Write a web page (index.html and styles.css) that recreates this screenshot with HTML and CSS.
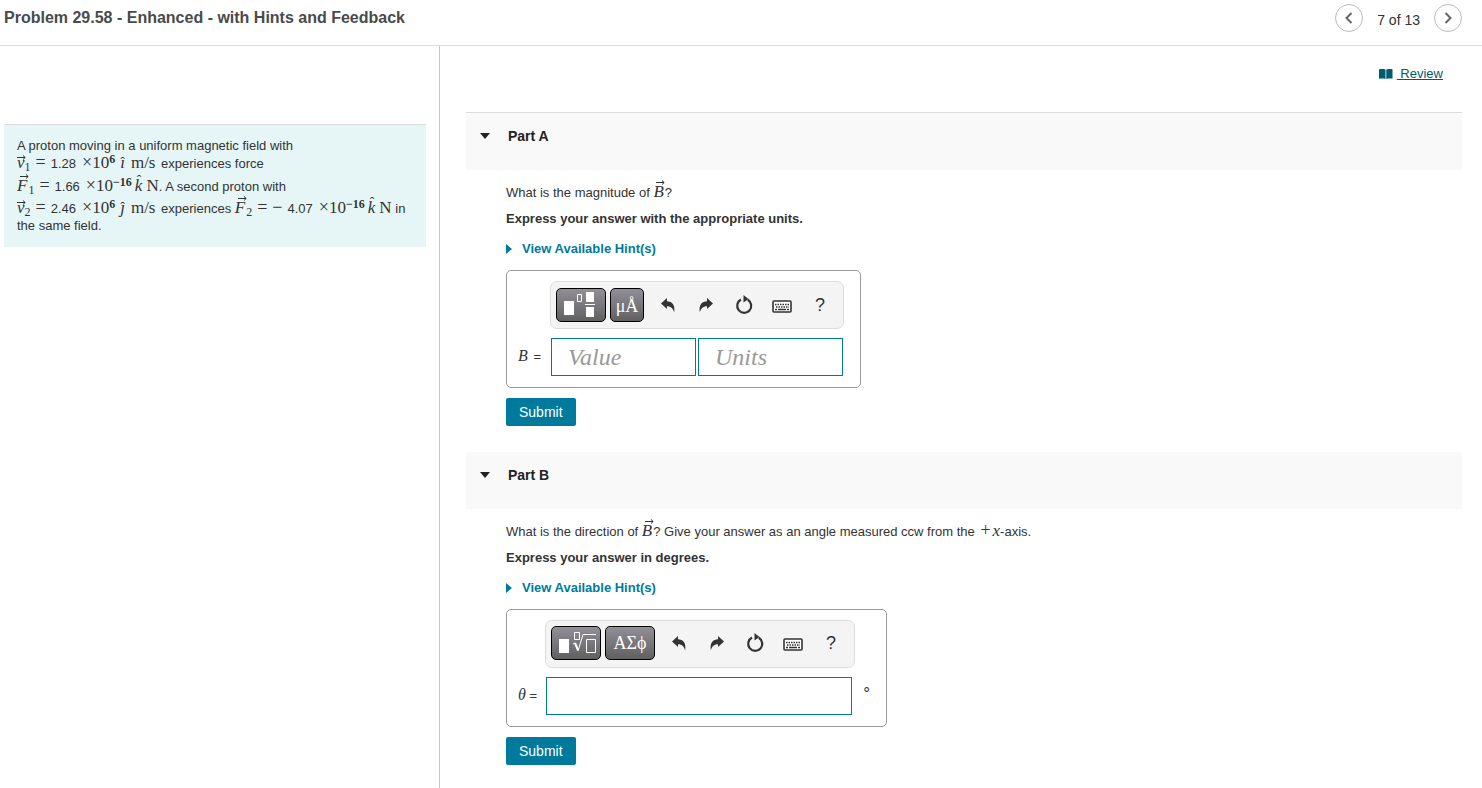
FILE: index.html
```html
<!DOCTYPE html>
<html lang="en">
<head>
<meta charset="utf-8">
<title>Problem 29.58</title>
<link rel="stylesheet" href="styles.css">
</head>
<body>
<svg class="defs" aria-hidden="true">
  <symbol id="undo" viewBox="0 0 16 16"><path d="M1 6.500 7 1v3.200c5 .2 8.300 3.300 7.200 11C13 11.500 11 9.200 7 9.200V12z"/></symbol>
  <symbol id="reset" viewBox="0 0 18 20"><path d="M12.800 4.800A7 7 0 1 1 6 4.600" fill="none" stroke="#333" stroke-width="2.200"/><path d="M8.500 0v7.500l5-3.500z"/></symbol>
  <symbol id="keyboard" viewBox="0 0 20 14"><rect x="1" y="1" width="18" height="11" rx="1" fill="#fff" stroke="#333" stroke-width="1.600"/><path d="M3 4.500h14M4 7h13" stroke="#333" stroke-width="1.500" stroke-dasharray="1.500 1"/><path d="M3 9.500h2M6 9.500h8M15 9.500h2" stroke="#333" stroke-width="1.500"/></symbol>
  <symbol id="arrow" viewBox="0 0 9 5"><path d="M0 2.500h8M6 .5l2.200 2L6 4.500" fill="none" stroke="#333"/></symbol>
</svg>
<header class="top">
  <h1>Problem 29.58 - Enhanced - with Hints and Feedback</h1>
  <nav class="pager">
    <button type="button" aria-label="Previous"><svg viewBox="0 0 10 14"><path d="M7.500 2 2.500 7l5 5"/></svg></button>
    <span>7 of 13</span>
    <button type="button" aria-label="Next"><svg viewBox="0 0 10 14"><path d="m2.500 2 5 5-5 5"/></svg></button>
  </nav>
</header>
<main class="page">
  <aside class="side">
    <div class="problem">
      <div>A proton moving in a uniform magnetic field with</div>
      <div class="mid"><i class="m vec">v<svg><use href="#arrow"/></svg></i><sub>1</sub><span class="op">=</span>1.28<span class="times">×</span><span class="m">10</span><sup>6</sup><i class="m hat">ı</i><span class="m unit">m/s</span> experiences force</div>
      <div class="tall"><i class="m vec cap">F<svg><use href="#arrow"/></svg></i><sub>1</sub><span class="op">=</span>1.66<span class="times">×</span><span class="m">10</span><sup>−16</sup><i class="m hat k">k</i><span class="m n">N</span>. A second proton with</div>
      <div><i class="m vec">v<svg><use href="#arrow"/></svg></i><sub>2</sub><span class="op">=</span>2.46<span class="times">×</span><span class="m">10</span><sup>6</sup><i class="m hat">ȷ</i><span class="m unit">m/s</span> experiences <i class="m vec cap">F<svg><use href="#arrow"/></svg></i><sub>2</sub><span class="op">=</span><span class="op neg">−</span>4.07<span class="times">×</span><span class="m">10</span><sup>−16</sup><i class="m hat k">k</i><span class="m n">N</span> in</div>
      <div>the same field.</div>
    </div>
  </aside>
  <div class="content">
    <div class="review"><a href="#"><svg viewBox="0 0 14 10"><path d="M0 .3C2.500 0 4.500 0 6.500.6V10C4.500 9.500 2.500 9.500 0 9.700zM7.300.6C9.500 0 11.500 0 13.500.3v9.400C11.500 9.500 9.500 9.500 7.300 10z"/></svg><span>&nbsp;Review</span></a></div>
    <section>
      <h2 class="part first"><button type="button"><svg viewBox="0 0 10 6"><path d="M0 0h10L5 6z"/></svg>Part A</button></h2>
      <div class="body">
        <p>What is the magnitude of <i class="m vec cap">B<svg><use href="#arrow"/></svg></i>?</p>
        <p class="instruction">Express your answer with the appropriate units.</p>
        <button type="button" class="hints"><svg viewBox="0 0 6 10"><path d="M0 0l6 5-6 5z"/></svg>View Available Hint(s)</button>
        <div class="answer units">
          <div class="tools">
            <button type="button" class="dark" aria-label="Templates"><svg viewBox="0 0 48 32"><path fill="#fff" d="M7 12h10v14H7zM29 3h8v10h-8zM28 15h10v1H28zM29 18h8v10h-8z"/><path fill="none" stroke="#fff" d="M20.500 5.500h4v7h-4z"/></svg></button>
            <button type="button" class="dark mu">μÅ</button>
            <button type="button" class="icon" aria-label="Undo"><svg><use href="#undo"/></svg></button>
            <button type="button" class="icon redo" aria-label="Redo"><svg><use href="#undo"/></svg></button>
            <button type="button" class="icon reset" aria-label="Reset"><svg><use href="#reset"/></svg></button>
            <button type="button" class="icon kb" aria-label="Keyboard shortcuts"><svg><use href="#keyboard"/></svg></button>
            <button type="button" class="icon">?</button>
          </div>
          <label for="value"><i>B</i> =</label>
          <div class="fields"><input id="value" type="text" placeholder="Value"><input type="text" placeholder="Units" aria-label="Units"></div>
        </div>
        <button type="button" class="submit">Submit</button>
      </div>
    </section>
    <section>
      <h2 class="part"><button type="button"><svg viewBox="0 0 10 6"><path d="M0 0h10L5 6z"/></svg>Part B</button></h2>
      <div class="body">
        <p>What is the direction of <i class="m vec cap">B<svg><use href="#arrow"/></svg></i>? Give your answer as an angle measured ccw from the <span class="plus">+</span><i class="m">x</i>-axis.</p>
        <p class="instruction">Express your answer in degrees.</p>
        <button type="button" class="hints"><svg viewBox="0 0 6 10"><path d="M0 0l6 5-6 5z"/></svg>View Available Hint(s)</button>
        <div class="answer angle">
          <div class="tools">
            <button type="button" class="dark" aria-label="Templates"><svg viewBox="0 0 48 32"><path fill="#fff" d="M7 12h10v14H7z"/><path fill="none" stroke="#fff" d="M22.500 5.500h5v7h-5zM21 17l2-1 3 8 5-16.500h13M34.500 12.500h9v13h-9z"/><path stroke="#fff" stroke-width="2" d="m23 16 3 7"/></svg></button>
            <button type="button" class="dark">ΑΣϕ</button>
            <button type="button" class="icon" aria-label="Undo"><svg><use href="#undo"/></svg></button>
            <button type="button" class="icon redo" aria-label="Redo"><svg><use href="#undo"/></svg></button>
            <button type="button" class="icon reset" aria-label="Reset"><svg><use href="#reset"/></svg></button>
            <button type="button" class="icon kb" aria-label="Keyboard shortcuts"><svg><use href="#keyboard"/></svg></button>
            <button type="button" class="icon">?</button>
          </div>
          <label for="theta"><i>θ</i> =</label>
          <div class="fields"><input id="theta" type="text"></div>
          <span class="degree">∘</span>
        </div>
        <button type="button" class="submit">Submit</button>
      </div>
    </section>
  </div>
</main>
</body>
</html>
```

FILE: styles.css
```css
* { box-sizing: border-box; }
body { margin: 0; min-height: 100vh; display: flex; flex-direction: column; background: #fff; color: #333; font: 13px/20px "Liberation Sans", Arial, sans-serif; }
button { font: inherit; color: inherit; background: none; border: 0; padding: 0; margin: 0; cursor: pointer; }
h1, h2, p { margin: 0; }
svg { display: block; flex: none; fill: currentColor; }
.defs { position: absolute; width: 0; height: 0; }

.top { display: flex; justify-content: space-between; align-items: flex-start; height: 46px; border-bottom: 1px solid #ddd; padding: 4px 20px 0 4px; }
.top h1 { font-size: 16px; line-height: 28px; color: #4a4a4a; }
.pager { display: flex; align-items: center; gap: 14px; font-size: 14px; }
.pager span { padding-top: 4px; }
.pager button { width: 28px; height: 28px; border: 1px solid #bbb; border-radius: 50%; display: grid; place-items: center; }
.pager svg { width: 10px; height: 14px; fill: none; stroke: #666; stroke-width: 2; }

.page { flex: 1; display: grid; grid-template-columns: 440px minmax(0, 1fr); }
.side { border-right: 1px solid #c0c5cf; padding: 78px 13px 0 4px; }
.problem { background: #e6f6f7; border-top: 1px solid #ddd; padding: 12px 0 13px 13px; white-space: nowrap; }
.problem div { height: 17px; line-height: 17px; }
.problem .mid { height: 19px; line-height: 19px; }
.problem .tall { height: 27px; line-height: 27px; }

.m, .op, .times, .plus, sub, sup { font-family: "Liberation Serif", "Times New Roman", serif; line-height: 0; }
.m { font-size: 17px; }
sub, sup { font-size: 12px; }
sup { font-weight: bold; }
sub { vertical-align: -3px; }
sup { vertical-align: 5px; }
.op { font-size: 18px; margin: 0 5px; }
.neg { margin-left: 0; }
.times { font-size: 18px; margin-left: 6px; }
.plus { font-size: 18px; margin: 0 2px; }
.unit { margin-right: 2px; }
.vec, .hat { position: relative; }
.vec svg { position: absolute; left: 0; bottom: 12px; width: 9px; height: 5px; }
.cap { margin-right: 1px; }
.cap svg { left: 3px; bottom: 16px; }
.hat { margin: 0 6px 0 5px; }
.hat::before { content: "ˆ"; position: absolute; left: 0; bottom: 9px; font-size: 14px; font-style: normal; }
.k { margin: 0 4px 0 3px; }
.k::before { left: 2px; bottom: 14px; }

.content { padding: 0 20px 0 26px; }
.review { display: flex; justify-content: flex-end; padding: 18px 19px 28px 0; }
.review a { display: flex; align-items: center; gap: 4px; color: #005a70; text-decoration: none; }
.review span { text-decoration: underline; }
.review svg { width: 14px; height: 10px; }
.part { background: #f9f9f9; font-size: 14px; padding: 13px 14px 24px; color: #222; line-height: 20px; }
.first { border-top: 1px solid #ddd; }
.part button { display: flex; align-items: center; gap: 18px; font-weight: bold; }
.part svg { width: 10px; height: 6px; }
.body { padding: 13px 0 26px 40px; }
.instruction { font-weight: bold; margin: 6px 0 10px; }
.hints { display: flex; align-items: center; gap: 10px; font-weight: bold; color: #007a9c; }
.hints svg { width: 6px; height: 10px; }

.answer { display: grid; width: max-content; margin: 11px 0 10px; padding: 10px 16px 11px 11px; border: 1px solid #999; border-radius: 5px; row-gap: 9px; align-items: center; }
.units { grid-template-columns: 32px 294px; }
.angle { grid-template-columns: 27px 310px 15px; }
.tools { grid-column: 2; display: flex; align-items: flex-start; height: 48px; padding: 6px 3px 6px 5px; border: 1px solid #ddd; border-radius: 7px; background: #f4f4f4; }
.angle .tools { padding-top: 5px; }
.tools button { flex: none; }
.dark { width: 50px; height: 34px; margin-right: 4px; border: 1px solid #000; border-radius: 5px; background: linear-gradient(#928f98, #606060); color: #fff; font: 18px/30px "Liberation Serif", serif; }
.dark svg { width: 48px; height: 32px; }
.mu { width: 34px; padding-top: 2px; }
.icon { display: grid; place-items: center; width: 38px; height: 34px; font-size: 18px; color: #333; }
.mu + .icon, .dark + .icon { margin-left: 1px; }
.icon svg { width: 16px; height: 16px; }
.redo svg { transform: scaleX(-1); }
.reset svg { width: 18px; height: 20px; }
.kb svg { width: 20px; height: 14px; margin-top: 4px; }
.answer label { grid-column: 1; }
.answer label i { font-family: "Liberation Serif", serif; font-size: 16px; line-height: 16px; }
.units label i { margin-right: 2px; }
.fields { display: flex; gap: 2px; padding: 0 1px; }
.fields input { flex: 1; min-width: 0; height: 38px; padding: 0 16px; border: 1px solid #007a9c; border-radius: 0; background: #fff; color: #333; font: italic 24px "Liberation Serif", serif; }
.fields input::placeholder { color: #999; opacity: 1; }
.angle .fields { padding-right: 3px; }
.degree { padding: 0 0 14px 7px; font-family: "Liberation Serif", serif; font-size: 15px; }
.submit { display: block; height: 28px; padding: 0 13px; border-radius: 2px; background: #007a9c; color: #fff; font-size: 14px; }
```
